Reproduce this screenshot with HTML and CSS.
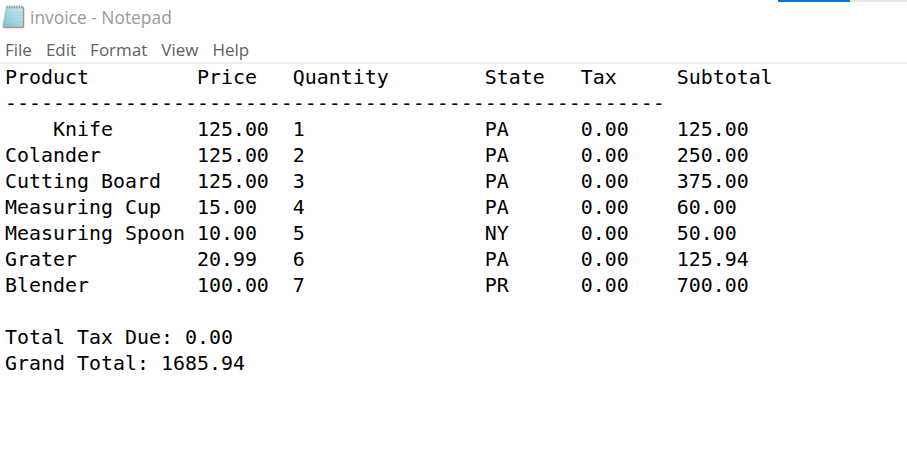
FILE: index.html
```html
<!DOCTYPE html>
<html lang="en">
<head>
<meta charset="utf-8">
<title>invoice - Notepad</title>
<link rel="stylesheet" href="styles.css">
</head>
<body>
<div class="progress"><span class="progress-done"></span><span class="progress-rest"></span></div>
<header class="titlebar">
<svg class="app-icon" width="24" height="26" viewBox="0 0 24 26" aria-hidden="true">
<defs>
<linearGradient id="pad" x1="0" y1="1" x2="1" y2="0">
<stop offset="0" stop-color="#6fbdd6"/>
<stop offset="0.55" stop-color="#aad8e6"/>
<stop offset="1" stop-color="#d5e8ee"/>
</linearGradient>
</defs>
<path d="M5.500 3H22.500V23H1.500L5.500 3Z" fill="url(#pad)" stroke="#a9c6d0"/>
<path d="M22.500 3V23.500M2.500 23.500H22.500" stroke="#a8966c" stroke-width="1.500"/>
<path d="M6 8.500H22M5.500 11.500H22M5 14.500H22M4.500 17.500H22" stroke="#a5d2e0"/>
<path d="M6 1.500V4.500M8.500 1.500V4.500M11 1.500V4.500M13.500 1.500V4.500M16 1.500V4.500M18.500 1.500V4.500M21 1.500V4.500" stroke="#8a989f" stroke-width="1.200"/>
</svg>
<span class="title">invoice - Notepad</span>
</header>
<nav class="menubar">
<span>File</span><span>Edit</span><span>Format</span><span>View</span><span>Help</span>
</nav>
<pre class="editor">Product         Price   Quantity        State   Tax     Subtotal
-------------------------------------------------------
    Knife       125.00  1               PA      0.00    125.00
Colander        125.00  2               PA      0.00    250.00
Cutting Board   125.00  3               PA      0.00    375.00
Measuring Cup   15.00   4               PA      0.00    60.00
Measuring Spoon 10.00   5               NY      0.00    50.00
Grater          20.99   6               PA      0.00    125.94
Blender         100.00  7               PR      0.00    700.00

Total Tax Due: 0.00
Grand Total: 1685.94</pre>
</body>
</html>
```
FILE: styles.css
```css
html, body {
  margin: 0;
  padding: 0;
  background: #fff;
}
body {
  width: 907px;
  height: 462px;
  overflow: hidden;
}
.progress {
  display: flex;
  justify-content: flex-end;
  height: 2px;
}
.progress-done {
  width: 72px;
  background: #0078d7;
}
.progress-rest {
  width: 57px;
  background: #e6e6e6;
}
.titlebar {
  display: flex;
  align-items: center;
  gap: 5px;
  height: 30px;
  padding-left: 1px;
}
.app-icon {
  flex: none;
}
.title {
  font: 17.4px "Open Sans", sans-serif;
  color: #9a9a9a;
}
.menubar {
  display: flex;
  gap: 14px;
  height: 30px;
  padding-left: 5px;
  align-items: flex-end;
  border-bottom: 2px solid #f0f0f0;
  font: 17px/24px "Open Sans", sans-serif;
  color: #5f5f5f;
}
.editor {
  margin: 0;
  padding: 1px 0 0 5px;
  font: 19.93px/26px "DejaVu Sans Mono", monospace;
  color: #000;
}
```
